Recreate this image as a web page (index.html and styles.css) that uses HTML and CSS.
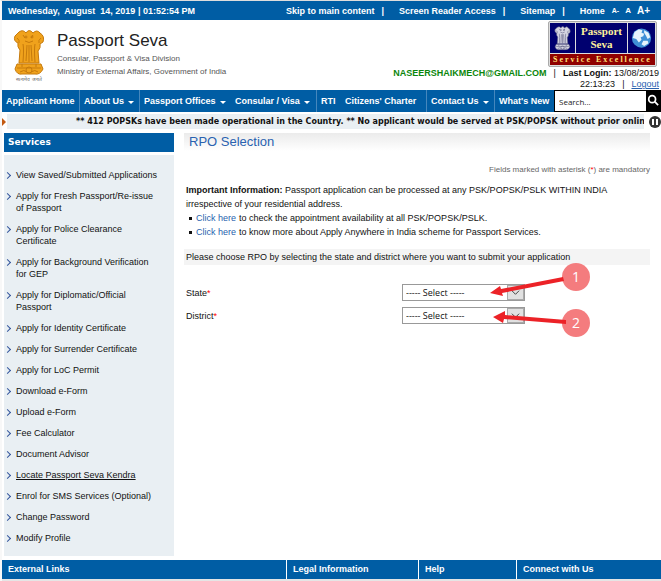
FILE: index.html
```html
<!DOCTYPE html>
<html lang="en">
  <head>
    <meta charset="UTF-8" />
    <meta name="viewport" content="width=device-width, initial-scale=1.0" />
    <title>Passport Seva</title>
    <link rel="stylesheet" href="styles.css">
  </head>
  <body>
    <!-- Shared drawings -->
    <svg class="sprite" aria-hidden="true">
      <symbol id="emblem" viewBox="0 0 32 46">
        <path d="M6 2 Q10 -1 13 3 Q16 -2 20 3 Q24 -1 27 3 Q32 6 30 12 L27 14 Q28 18 25 21 L26 33 H6 L7 20 Q4 17 5 13 Q0 11 2 6 Z" />
        <path d="M4 34 H28 L30 39 Q27 45 22 44 H9 Q4 45 2 39 Z" />
        <g class="emblem-lines">
          <path d="M10 5 L12 8 M20 5 L18 8 M12 11 Q16 14 20 11 M4 8 Q7 10 6 13 M28 8 Q25 10 26 13" />
          <path d="M10 14 Q11 19 10 32 M14 15 L13 31 M18 15 L19 31 M22 14 Q21 19 22 32 M16 15 V32" />
          <path d="M4 38 H28 M9 34 V37 M23 34 V37 M7 42 Q11 39 14 42 M18 42 Q22 39 25 42" />
          <circle cx="16" cy="40" r="3" />
          <circle cx="13" cy="7" r="1" />
          <circle cx="19" cy="7" r="1" />
        </g>
      </symbol>
    </svg>

    <div class="page">
      <div class="topbar">
        <span class="date">Wednesday,&nbsp; August &nbsp;14, 2019 | 01:52:54 PM</span>
        <a href="#main">Skip to main content</a>
        <span>|</span>
        <a href="#">Screen Reader Access</a>
        <span>|</span>
        <a href="#">Sitemap</a>
        <span>|</span>
        <a href="#">Home</a>
        <div class="text-size">
          <button class="small">A-</button>
          <button class="medium">A</button>
          <button class="large">A+</button>
        </div>
      </div>

      <header class="header">
        <div class="brand">
          <div class="emblem">
            <svg class="emblem-gold"><use href="#emblem" /></svg>
            <span class="motto">सत्यमेव जयते</span>
          </div>
          <div>
            <h1>Passport Seva</h1>
            <p>Consular, Passport &amp; Visa Division</p>
            <p>Ministry of External Affairs, Government of India</p>
          </div>
        </div>
        <div class="account">
          <div class="badge">
            <div class="badge-top">
              <div class="badge-cell"><svg class="emblem-silver"><use href="#emblem" /></svg></div>
              <div class="badge-name">Passport<br>Seva</div>
              <div class="badge-cell">
                <svg class="globe" viewBox="0 0 24 24">
                  <circle cx="12" cy="12" r="11" fill="#3f8fd6" />
                  <path d="M4 5 L9 2 L13 3 L12 6 L15 7 L14 10 L11 11 L12 14 L9 17 L6 13 L2 12 Z M15 3 L20 6 L22 11 L19 13 L17 9 L15 6 Z M14 15 L19 15 L20 18 L15 21 L12 19 Z" fill="#e6f3fc" />
                </svg>
              </div>
            </div>
            <div class="badge-bottom">Service Excellence</div>
          </div>
          <div class="login"><b class="email">NASEERSHAIKMECH@GMAIL.COM</b><span class="bar">|</span><b>Last Login:</b> 13/08/2019</div>
          <div class="login">22:13:23<span class="bar">|</span><a href="#">Logout</a></div>
        </div>
      </header>

      <nav class="nav">
        <a href="#">Applicant Home</a>
        <a href="#" class="line">About Us <i class="caret"></i></a>
        <a href="#" class="line">Passport Offices <i class="caret"></i></a>
        <a href="#">Consular / Visa <i class="caret"></i></a>
        <a href="#" class="line">RTI</a>
        <a href="#">Citizens' Charter</a>
        <a href="#" class="line">Contact Us <i class="caret"></i></a>
        <a href="#" class="line">What's New</a>
        <form class="search">
          <input type="text" placeholder="Search..." aria-label="Search">
          <button type="button" aria-label="Search">
            <svg viewBox="0 0 14 14"><circle cx="6" cy="6" r="4" /><path d="M9 9 L13 13" /></svg>
          </button>
        </form>
      </nav>

      <div class="ticker">
        <i class="ticker-arrow"></i>
        <div class="ticker-text">** 412 POPSKs have been made operational in the Country. ** No applicant would be served at PSK/POPSK without prior online appointment.</div>
        <button class="pause" aria-label="Pause"><i></i><i></i></button>
      </div>

      <div class="columns">
        <aside class="sidebar">
          <h2>Services</h2>
          <ul>
            <li><a href="#">View Saved/Submitted Applications</a></li>
            <li><a href="#">Apply for Fresh Passport/Re-issue of Passport</a></li>
            <li><a href="#">Apply for Police Clearance Certificate</a></li>
            <li><a href="#">Apply for Background Verification for GEP</a></li>
            <li><a href="#">Apply for Diplomatic/Official Passport</a></li>
            <li><a href="#">Apply for Identity Certificate</a></li>
            <li><a href="#">Apply for Surrender Certificate</a></li>
            <li><a href="#">Apply for LoC Permit</a></li>
            <li><a href="#">Download e-Form</a></li>
            <li><a href="#">Upload e-Form</a></li>
            <li><a href="#">Fee Calculator</a></li>
            <li><a href="#">Document Advisor</a></li>
            <li><a href="#" class="current">Locate Passport Seva Kendra</a></li>
            <li><a href="#">Enrol for SMS Services (Optional)</a></li>
            <li><a href="#">Change Password</a></li>
            <li><a href="#">Modify Profile</a></li>
          </ul>
        </aside>

        <main id="main" class="content">
          <h2>RPO Selection</h2>
          <p class="mandatory">Fields marked with asterisk (<span class="star">*</span>) are mandatory</p>
          <div class="info">
            <p><b>Important Information:</b> Passport application can be processed at any PSK/POPSK/PSLK WITHIN INDIA irrespective of your residential address.</p>
            <ul>
              <li><a href="#">Click here</a> to check the appointment availability at all PSK/POPSK/PSLK.</li>
              <li><a href="#">Click here</a> to know more about Apply Anywhere in India scheme for Passport Services.</li>
            </ul>
          </div>
          <p class="choose">Please choose RPO by selecting the state and district where you want to submit your application</p>
          <form class="fields">
            <label for="state">State<span class="star">*</span></label>
            <div class="select">
              <select id="state"><option>----- Select -----</option></select>
              <svg viewBox="0 0 10 6"><path d="M1 1 L5 5 L9 1" /></svg>
            </div>
            <label for="district">District<span class="star">*</span></label>
            <div class="select">
              <select id="district"><option>----- Select -----</option></select>
              <svg viewBox="0 0 10 6"><path d="M1 1 L5 5 L9 1" /></svg>
            </div>

            <!-- Numbered pointers over the two drop-downs -->
            <svg class="callouts" viewBox="0 0 104 78">
              <circle cx="86" cy="16" r="14" />
              <circle cx="86" cy="62" r="14" />
              <path d="M74 20 L12 32 L13 35 L0 32 L10 25 L11 28 L73 16 Z" />
              <path d="M76 63 L14 58 L13 62 L3 56 L15 50 L15 54 L76 59 Z" />
              <text x="86" y="21">1</text>
              <text x="86" y="67">2</text>
            </svg>
          </form>
        </main>
      </div>

      <footer class="footer">
        <h3>External Links</h3>
        <h3>Legal Information</h3>
        <h3>Help</h3>
        <h3>Connect with Us</h3>
      </footer>
    </div>
  </body>
</html>
```
FILE: styles.css
```css
* {
  box-sizing: border-box;
}

body {
  margin: 0;
  background-color: #fff;
  color: #111;
  font-family: Arial, "Liberation Sans", sans-serif;
  font-size: 9px;
}

h1, h2, h3, p, ul {
  margin: 0;
  padding: 0;
  font-weight: normal;
}

ul {
  list-style: none;
}

button {
  border: none;
  padding: 0;
  background: none;
  font-family: inherit;
}

.sprite {
  display: none;
}

.page {
  border-top: 1px solid #ddd;
  border-left: 2px solid #f8f8f8;
}

/* Blue strip at the top */
.topbar {
  display: flex;
  align-items: center;
  gap: 7px;
  height: 19px;
  padding: 0 11px 0 6px;
  background-color: #005da4;
  color: #fff;
  font-weight: bold;
}

.topbar a {
  color: #fff;
  text-decoration: none;
}

.date {
  margin-right: auto;
}

.topbar span + a {
  margin-left: 8px;
}

.topbar .date + a {
  margin-left: 0;
}

.text-size {
  display: flex;
  align-items: center;
  gap: 6px;
}

.text-size button {
  color: #fff;
  font-weight: bold;
}

.small {
  font-size: 7px;
}

.medium {
  font-size: 8px;
}

.large {
  font-size: 10px;
}

/* Header */
.header {
  display: flex;
  justify-content: space-between;
  min-height: 70px;
}

.brand {
  display: flex;
  gap: 12px;
  padding: 10px 0 0 11px;
}

.brand h1 {
  color: #222;
  font-size: 17px;
  line-height: 22px;
}

.brand p {
  color: #555;
  font-size: 8px;
  line-height: 13px;
}

.emblem {
  display: flex;
  flex-direction: column;
  align-items: center;
  width: 32px;
}

.emblem-gold {
  width: 32px;
  height: 46px;
  fill: #f0a21c;
  stroke: #c67a0c;
}

.emblem-silver {
  width: 17px;
  height: 25px;
  fill: #d5d5e2;
  stroke: #55557a;
}

.emblem-lines {
  fill: none;
  stroke-width: 1;
}

.motto {
  color: #666;
  font-size: 5px;
  line-height: 6px;
  white-space: nowrap;
}

.account {
  display: flex;
  flex-direction: column;
  align-items: flex-end;
  padding: 1px 2px 0 0;
}

.badge {
  width: 109px;
  margin: 0 2px 1px 0;
  padding: 1px;
  border: 1px solid #aaa;
  border-radius: 2px;
  background-color: #ddd;
}

.badge-top {
  display: grid;
  grid-template-columns: 25px 1fr 27px;
  gap: 1px;
  height: 30px;
}

.badge-cell, .badge-name {
  display: flex;
  align-items: center;
  justify-content: center;
  background-color: #00006f;
}

.badge-name {
  color: #fff29c;
  font-family: "Liberation Serif", serif;
  font-size: 11px;
  font-weight: bold;
  line-height: 13px;
  text-align: center;
}

.globe {
  width: 21px;
  height: 24px;
}

.badge-bottom {
  height: 11px;
  margin-top: 1px;
  background-color: #900000;
  color: #ffe27a;
  font-family: "Liberation Serif", serif;
  font-size: 8px;
  font-weight: bold;
  line-height: 11px;
  letter-spacing: 2px;
  text-align: center;
  white-space: nowrap;
}

.login {
  font-size: 9px;
  line-height: 11px;
}

.login a {
  color: #2a62b0;
}

.email {
  color: #0b860b;
}

.bar {
  margin: 0 7px;
}

/* Main navigation */
.nav {
  display: grid;
  grid-template-columns: 77fr 60fr 92fr 85fr 25fr 85fr 68fr 60fr 107fr;
  height: 22px;
  background-color: #005da4;
}

.nav > a {
  display: flex;
  align-items: center;
  min-width: 0;
  padding-left: 4px;
  color: #fff;
  font-weight: bold;
  text-decoration: none;
  white-space: nowrap;
}

.nav .line {
  border-left: 1px solid #4587bd;
}

.caret {
  margin: 2px 0 0 4px;
  border: 3px solid transparent;
  border-top-color: #fff;
  border-bottom: none;
}

.search {
  display: flex;
  min-width: 0;
  border: 1px solid #000;
  background-color: #000;
}

.search input {
  flex: 1;
  min-width: 0;
  padding: 0 4px;
  border: none;
  font-family: "Open Sans", sans-serif;
  font-size: 8px;
}

.search input::placeholder {
  color: #222;
}

.search button {
  width: 14px;
}

.search svg {
  width: 12px;
  height: 12px;
  fill: none;
  stroke: #fff;
  stroke-width: 2;
}

/* Scrolling news line */
.ticker {
  display: flex;
  align-items: center;
  gap: 1px;
  height: 15px;
  margin-top: 2px;
}

.ticker-arrow {
  border: 4px solid transparent;
  border-left-color: #c35a12;
  border-right: none;
}

.ticker-text {
  flex: 1;
  min-width: 0;
  margin-right: 4px;
  padding-left: 69px;
  overflow: hidden;
  background-color: #e9eff3;
  font-family: "DejaVu Sans", Verdana, sans-serif;
  font-size: 8px;
  font-weight: bold;
  line-height: 15px;
  white-space: nowrap;
}

.pause {
  display: flex;
  align-items: center;
  justify-content: center;
  gap: 2px;
  width: 12px;
  height: 12px;
  border-radius: 50%;
  background-color: #333;
}

.pause i {
  width: 2px;
  height: 6px;
  background-color: #fff;
}

/* Sidebar and content */
.columns {
  display: grid;
  grid-template-columns: 170fr 466fr;
  gap: 10px;
  margin-top: 4px;
  padding: 0 11px 0 2px;
}

.sidebar h2 {
  margin-bottom: 3px;
  padding-left: 4px;
  background-color: #005da4;
  color: #fff;
  font-family: "DejaVu Sans", Verdana, sans-serif;
  font-size: 9px;
  font-weight: bold;
  line-height: 19px;
}

.sidebar ul {
  display: flex;
  flex-direction: column;
  gap: 9px;
  padding: 14px 16px 12px 1px;
  background-color: #e9eff3;
}

.sidebar li {
  display: flex;
  gap: 6px;
  line-height: 12px;
}

.sidebar li::before {
  content: "";
  flex: none;
  width: 4px;
  height: 4px;
  margin-top: 4px;
  border: solid #33559c;
  border-width: 1px 1px 0 0;
  transform: rotate(45deg);
}

.sidebar a {
  color: #111;
  text-decoration: none;
}

.sidebar .current {
  text-decoration: underline;
}

.content h2 {
  padding-left: 5px;
  background: linear-gradient(#ebebeb, #fff);
  color: #2a62b0;
  font-size: 13px;
  line-height: 18px;
}

.mandatory {
  margin-top: 13px;
  color: #666;
  font-size: 8px;
  line-height: 12px;
  text-align: right;
}

.star {
  color: #f00;
}

.info {
  margin-top: 7px;
  padding-left: 2px;
  line-height: 14px;
}

.info li {
  display: flex;
  gap: 3px;
}

.info li::before {
  content: "";
  flex: none;
  width: 3px;
  height: 3px;
  margin: 6px 1px 0 3px;
  background-color: #111;
}

.info a {
  color: #1f5fae;
  text-decoration: none;
}

.choose {
  margin-top: 10px;
  padding-left: 2px;
  background-color: #f4f4f4;
  line-height: 16px;
}

.fields {
  position: relative;
  display: grid;
  grid-template-columns: 216fr 248fr;
  align-items: center;
  gap: 6px 0;
  margin-top: 19px;
  padding-left: 2px;
}

.select {
  display: grid;
  grid-template-columns: 104px 17px;
  width: 123px;
  border: 1px solid #999;
}

.select select {
  grid-area: 1 / 1 / 2 / 3;
  height: 15px;
  padding: 0 3px;
  border: none;
  border-radius: 0;
  background-color: #fff;
  color: #111;
  font-family: "Open Sans", sans-serif;
  font-size: 9px;
  appearance: none;
}

.select svg {
  grid-area: 1 / 2;
  width: 17px;
  height: 15px;
  padding: 3px;
  border: 1px solid #aaa;
  background-color: #e1e1e1;
  fill: none;
  stroke: #333;
  pointer-events: none;
}

.callouts {
  position: absolute;
  top: -23px;
  right: 56px;
  width: 104px;
  height: 78px;
  pointer-events: none;
}

.callouts circle {
  fill: #f47c7e;
}

.callouts path {
  fill: #ec2227;
}

.callouts text {
  fill: #fff;
  font-family: "Open Sans", sans-serif;
  font-size: 14px;
  text-anchor: middle;
}

/* Footer */
.footer {
  display: grid;
  grid-template-columns: 284fr 131fr 97fr 144fr;
  gap: 1px;
  margin-top: 4px;
  border-bottom: 2px solid #e5e5e5;
}

.footer h3 {
  padding-left: 6px;
  background-color: #005da4;
  color: #fff;
  font-size: 9px;
  font-weight: bold;
  line-height: 19px;
}
```
